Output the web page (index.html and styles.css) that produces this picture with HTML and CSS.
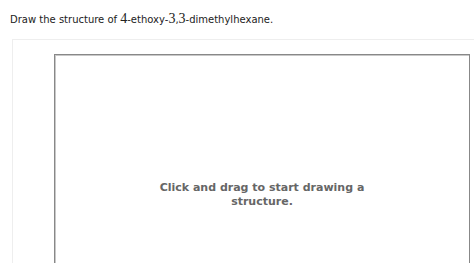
FILE: index.html
```html
<!DOCTYPE html>
<html>
<head>
<meta charset="utf-8">
<link rel="stylesheet" href="styles.css">
</head>
<body>
<p class="question">Draw the structure of <span class="num">4</span>-ethoxy-<span class="num">3</span>,<span class="num">3</span>-dimethylhexane.</p>
<div class="panel">
  <div class="canvas">
    <div class="hint">Click and drag to start drawing a structure.</div>
  </div>
</div>
</body>
</html>
```
FILE: styles.css
```css
html, body {
  margin: 0;
  padding: 0;
  background: #ffffff;
  overflow: hidden;
}
body {
  font-family: "DejaVu Sans", Verdana, sans-serif;
  color: #222;
}
.question {
  margin: 0;
  padding: 12px 0 0 10px;
  font-size: 10px;
  line-height: 14px;
  height: 27px;
}
.num {
  font-family: "Liberation Serif", "Times New Roman", serif;
  font-size: 14px;
}
.panel {
  margin-left: 12px;
  border-top: 1px solid #eeeeee;
  border-left: 1px solid #eeeeee;
  padding: 14px 0 0 41px;
  height: 209px;
}
.canvas {
  width: 414px;
  height: 208px;
  border: 1px solid #888;
  border-bottom: 0;
  box-shadow: 1px 1px 0 #c8c8c8 inset;
  display: flex;
  justify-content: center;
}
.hint {
  margin-top: 126px;
  width: 220px;
  text-align: center;
  font-weight: bold;
  font-size: 11px;
  line-height: 14px;
  color: #666;
}
```
